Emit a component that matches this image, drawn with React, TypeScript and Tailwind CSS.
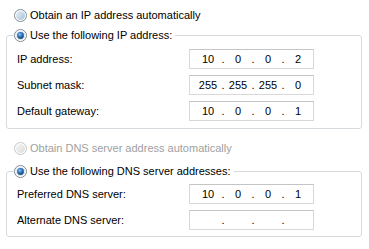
import { useId } from 'react';

type RadioState = 'off' | 'on' | 'disabled';

function Radio({ state }: { state: RadioState }) {
    const id = useId().replace(/:/g, '');
    const disabled = state === 'disabled';
    return (
        <svg width="13" height="13" viewBox="0 0 13 13" className="shrink-0">
            <defs>
                <linearGradient id={`f${id}`} x1="0" y1="0" x2="1" y2="1">
                    <stop offset="0" stopColor={disabled ? '#f4f4f4' : '#e8f0f6'} />
                    <stop offset="1" stopColor={disabled ? '#dedede' : '#a8c2da'} />
                </linearGradient>
                <radialGradient id={`d${id}`} cx="0.4" cy="0.35" r="0.7">
                    <stop offset="0" stopColor="#8fd0f5" />
                    <stop offset="0.45" stopColor="#2f78bd" />
                    <stop offset="1" stopColor="#15406f" />
                </radialGradient>
            </defs>
            <circle cx="6.5" cy="6.5" r="6" fill="#fff" stroke={disabled ? '#c6c6c6' : '#7f8b96'} strokeWidth="1" />
            <circle cx="6.5" cy="6.5" r="4.6" fill={`url(#f${id})`} />
            {state === 'on' && (
                <>
                    <circle cx="6.5" cy="6.5" r="4.6" fill="#e6ecf2" />
                    <circle cx="6.5" cy="6.5" r="3.4" fill={`url(#d${id})`} />
                </>
            )}
        </svg>
    );
}

function RadioLabel({ state, text }: { state: RadioState; text: string }) {
    return (
        <div className="flex items-center h-[14px] gap-[3px]">
            <Radio state={state} />
            <span className={state === 'disabled' ? 'text-[#a0a0a0]' : 'text-black'}>{text}</span>
        </div>
    );
}

function IpBox({ octets }: { octets: string[] }) {
    return (
        <div className="flex items-center w-[125px] h-[20px] pl-[7px] border border-[#d8d8d8] border-t-[#c4c4c4] bg-white">
            {octets.map((o, i) => (
                <div key={i} className="flex">
                    {i > 0 && <span className="w-[8px] text-center">.</span>}
                    <span className="w-[22px] text-center">{o}</span>
                </div>
            ))}
        </div>
    );
}

function Row({ label, octets }: { label: string; octets: string[] }) {
    return (
        <div className="flex items-center h-[20px]">
            <span className="w-[175px] pl-[3px]">{label}</span>
            <IpBox octets={octets} />
        </div>
    );
}

export default function App() {
    return (
        <div
            className="w-[369px] h-[249px] bg-white text-[11px] leading-[14px] text-black pl-[6px] pr-[7px] pt-[8px]"
            style={{ fontFamily: '"Liberation Sans", Arial, sans-serif' }}
        >
            <div className="pl-[8px]">
                <RadioLabel state="off" text="Obtain an IP address automatically" />
            </div>

            <fieldset className="mt-[6px] border border-[#d5dadf] rounded-[3px] pl-[7px] pr-0 pt-[7px] pb-[7px] min-w-0">
                <legend className="pr-[3px]">
                    <RadioLabel state="on" text="Use the following IP address:" />
                </legend>
                <div className="flex flex-col gap-[6px]">
                    <Row label="IP address:" octets={['10', '0', '0', '2']} />
                    <Row label="Subnet mask:" octets={['255', '255', '255', '0']} />
                    <Row label="Default gateway:" octets={['10', '0', '0', '1']} />
                </div>
            </fieldset>

            <div className="pl-[8px] mt-[12px]">
                <RadioLabel state="disabled" text="Obtain DNS server address automatically" />
            </div>

            <fieldset className="mt-[9px] border border-[#d5dadf] rounded-[3px] pl-[7px] pr-0 pt-[6px] pb-[6px] min-w-0">
                <legend className="pr-[3px]">
                    <RadioLabel state="on" text="Use the following DNS server addresses:" />
                </legend>
                <div className="flex flex-col gap-[6px]">
                    <Row label="Preferred DNS server:" octets={['10', '0', '0', '1']} />
                    <Row label="Alternate DNS server:" octets={['', '', '', '']} />
                </div>
            </fieldset>
        </div>
    );
}
